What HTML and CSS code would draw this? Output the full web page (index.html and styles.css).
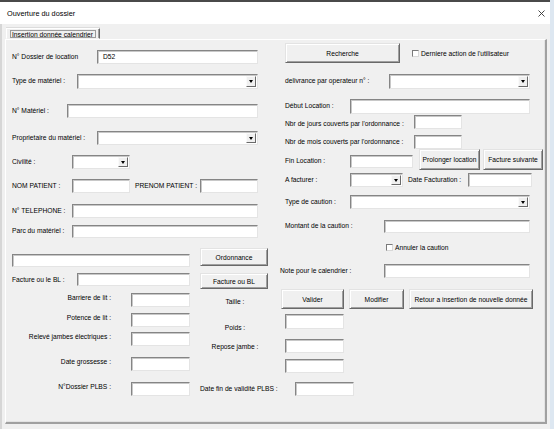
FILE: index.html
```html
<!DOCTYPE html>
<html lang="fr">
<head>
<meta charset="utf-8">
<title>Ouverture du dossier</title>
<link rel="stylesheet" href="styles.css">
</head>
<body>
<div class="window">
  <div class="titlebar">
    <span class="title">Ouverture du dossier</span>
    <svg class="close" width="7" height="7" viewBox="0 0 7 7"><path d="M0.5 0.5L6.5 6.5M6.5 0.5L0.5 6.5" stroke="#333" stroke-width="0.9" fill="none"/></svg>
  </div>
  <div class="client">
    <div class="tabs"><div class="tab"><span class="tab-label">Insertion donnée calendrier</span></div></div>
    <div class="page">
      <div class="form">
        <div class="col-left">
          <div class="row mt10"><span class="lbl w85">N° Dossier de location</span><div class="tb w161">D52</div></div>
          <div class="row mt10"><span class="lbl w65">Type de matériel :</span><div class="tb sel w181 h15"><span class="drop"></span></div></div>
          <div class="row mt15"><span class="lbl w55">N° Matériel :</span><div class="tb w191"></div></div>
          <div class="row mt13"><span class="lbl w85">Proprietaire du matériel :</span><div class="tb sel w161"><span class="drop"></span></div></div>
          <div class="row mt10"><span class="lbl w60">Civilité :</span><div class="tb sel w58"><span class="drop"></span></div></div>
          <div class="row mt10"><span class="lbl w60">NOM PATIENT :</span><div class="tb w58"></div><span class="lbl w65 ml5">PRENOM PATIENT :</span><div class="tb w58"></div></div>
          <div class="row mt11"><span class="lbl w60">N° TELEPHONE :</span><div class="tb w186"></div></div>
          <div class="row mt7"><span class="lbl w60">Parc du matériel :</span><div class="tb w186 h13"></div></div>
          <div class="row top mt10"><div class="tb w178 h13 mt6"></div><button class="btn w68 h18 ml10">Ordonnance</button></div>
          <div class="row top mt6"><span class="lbl w65 mt2">Facture ou le BL :</span><div class="tb w113 h13"></div><button class="btn w68 h16 ml10">Facture ou BL</button></div>
          <div class="lower">
            <div class="lower-fields">
              <div class="row"><span class="lbl rt">Barriere de lit :</span><div class="tb w59"></div></div>
              <div class="row mt6"><span class="lbl rt">Potence de lit :</span><div class="tb w59"></div></div>
              <div class="row mt5"><span class="lbl rt">Relevé jambes électriques :</span><div class="tb w59"></div></div>
              <div class="row mt11"><span class="lbl rt">Date grossesse :</span><div class="tb w59"></div></div>
            </div>
            <div class="lower-mid">
              <span class="mid m1">Taille :</span>
              <span class="mid m2">Poids :</span>
              <span class="mid m3">Repose jambe :</span>
            </div>
          </div>
          <div class="row mt11"><span class="lbl rt">N°Dossier PLBS :</span><div class="tb w59"></div><span class="lbl w95 ml10">Date fin de validité PLBS :</span><div class="tb w59"></div></div>
        </div>
        <div class="col-right">
          <div class="row top mt3"><button class="btn w115 h20 ml5">Recherche</button><span class="check ml12 mt6"><span class="box"></span>Derniere action de l'utilisateur</span></div>
          <div class="row mt11"><span class="lbl w104 ml5">delivrance par operateur n° :</span><div class="tb sel w141 h15"><span class="drop"></span></div></div>
          <div class="row mt10"><span class="lbl w65 ml5">Début Location :</span><div class="tb w180 h15"></div></div>
          <div class="row mt1"><span class="lbl w129 ml5 down">Nbr de jours couverts par l'ordonnance :</span><div class="tb w48"></div></div>
          <div class="row mt6"><span class="lbl w129 ml5">Nbr de mois couverts par l'ordonnance :</span><div class="tb w48"></div></div>
          <div class="row top"><span class="lbl w65 ml5 mt7">Fin Location :</span><div class="tb w63 h13 mt6"></div><button class="btn w61 h21 ml6">Prolonger location</button><button class="btn w60 h21 ml3">Facture suivante</button></div>
          <div class="row mt3"><span class="lbl w65 ml5">A facturer :</span><div class="tb sel w53"><span class="drop"></span></div><span class="lbl w60 ml5">Date Facturation :</span><div class="tb w64"></div></div>
          <div class="row mt8"><span class="lbl w65 ml5">Type de caution :</span><div class="tb sel w180"><span class="drop"></span></div></div>
          <div class="row mt11"><span class="lbl w99 ml5">Montant de la caution :</span><div class="tb w146 h13"></div></div>
          <div class="row mt10"><span class="check ml106"><span class="box"></span>Annuler la caution</span></div>
          <div class="row mt12"><span class="lbl w104">Note pour le calendrier :</span><div class="tb w146"></div></div>
          <div class="row mt11"><button class="btn w63 h20 ml1">Valider</button><button class="btn w55 h20 ml5">Modifier</button><button class="btn w124 h20 ml5">Retour a insertion de nouvelle donnée</button></div>
          <div class="row mt5"><div class="tb w59 h15 ml5"></div></div>
          <div class="row mt10"><div class="tb w59 ml5"></div></div>
          <div class="row mt6"><div class="tb w59 ml5"></div></div>
        </div>
      </div>
    </div>
  </div>
</div>
</body>
</html>
```
FILE: styles.css
```css
* { box-sizing: border-box; }
html, body { margin: 0; padding: 0; }
body {
  width: 554px;
  height: 429px;
  overflow: hidden;
  background: #dde7f1;
  font-family: "Liberation Sans", Arial, sans-serif;
  font-size: 6.7px;
  color: #000;
}
.window {
  width: 550px;
  height: 429px;
  display: flex;
  flex-direction: column;
  background: #f0f0f0;
}
.titlebar {
  height: 24px;
  flex-shrink: 0;
  border-top: 2px solid #4a4a4a;
  background: #fff;
  display: flex;
  align-items: center;
  justify-content: space-between;
  padding: 0 5px 0 7px;
}
.title { font-size: 7.3px; color: #000; }
.close { display: block; }
.client {
  flex: 1;
  border-left: 2px solid #d6d6d6;
  padding: 4px 0 0 4px;
}
.tabs { height: 11px; display: flex; }
.tab {
  width: 94px;
  height: 11px;
  border: 1px solid;
  border-color: #fff #6a6a6a #f0f0f0 #fff;
  box-shadow: inset -1px 0 0 #a0a0a0, 0 -1px 0 #dcdcdc;
  padding: 1px 3px 0 3px;
}
.tab-label {
  display: block;
  height: 8px;
  line-height: 7px;
  border: 1px solid #9a9a9a;
  padding-left: 1px;
  white-space: nowrap;
}
.page {
  margin-left: -1px;
  width: 542px;
  height: 385px;
  border-style: solid;
  border-width: 1px 2px 2px 1px;
  border-color: #fff #a0a0a0 #a0a0a0 #fff;
  box-shadow: inset -1px -1px 0 #e3e3e3;
}
.form { display: flex; padding-left: 6px; }
.col-left { width: 268px; flex-shrink: 0; display: flex; flex-direction: column; }
.col-right { width: 265px; flex-shrink: 0; display: flex; flex-direction: column; }
.row { display: flex; align-items: center; flex-shrink: 0; }
.row.top { align-items: flex-start; }
.lbl {
  flex-shrink: 0;
  white-space: nowrap;
  line-height: 9px;
  margin-bottom: 2px;
}
.lbl.down { margin-bottom: 0; margin-top: 3px; }
.row.top .lbl { margin-bottom: 0; }
.lbl.rt { width: 99px; margin-right: 20px; text-align: right; margin-bottom: 5px; }
.tb {
  height: 14px;
  flex-shrink: 0;
  background: #fff;
  border: 1px solid;
  border-color: #858585 #e4e4e4 #e4e4e4 #858585;
  box-shadow: inset 1px 1px 0 #c8c8c8;
  padding-left: 5px;
  line-height: 12px;
  white-space: nowrap;
}
.sel {
  display: flex;
  justify-content: flex-end;
  padding: 1px;
}
.drop {
  width: 10px;
  background: #f0f0f0;
  border: 1px solid;
  border-color: #fafafa #6a6a6a #6a6a6a #fafafa;
  display: flex;
  align-items: center;
  justify-content: center;
}
.drop::after {
  content: "";
  width: 0;
  height: 0;
  border-left: 2.5px solid transparent;
  border-right: 2.5px solid transparent;
  border-top: 3px solid #000;
}
.btn {
  flex-shrink: 0;
  padding: 0;
  margin: 0;
  font: inherit;
  color: #000;
  background: #f0f0f0;
  border: 1px solid;
  border-color: #e3e3e3 #696969 #696969 #e3e3e3;
  box-shadow: inset 1px 1px 0 #fff, inset -1px -1px 0 #a0a0a0;
  display: flex;
  align-items: center;
  justify-content: center;
  white-space: nowrap;
}
.check {
  display: flex;
  align-items: center;
  white-space: nowrap;
  line-height: 9px;
}
.box {
  width: 7px;
  height: 7px;
  background: #fff;
  border: 1px solid;
  border-color: #7a7a7a #d8d8d8 #d8d8d8 #7a7a7a;
  margin-right: 2px;
  flex-shrink: 0;
}
.lower { display: flex; margin-top: 4px; }
.lower-fields { width: 188px; flex-shrink: 0; display: flex; flex-direction: column; }
.lower-mid { width: 70px; flex-shrink: 0; display: flex; flex-direction: column; align-items: center; margin-left: 0; }
.mid { line-height: 9px; white-space: nowrap; }
.m1 { margin-top: 4px; }
.m2 { margin-top: 17px; }
.m3 { margin-top: 10px; }

/* sizes */
.w48 { width: 48px; } .w53 { width: 53px; } .w55 { width: 55px; } .w58 { width: 58px; }
.w59 { width: 59px; } .w60 { width: 60px; } .w61 { width: 61px; } .w63 { width: 63px; }
.w64 { width: 64px; } .w65 { width: 65px; } .w68 { width: 68px; } .w85 { width: 85px; }
.w95 { width: 95px; } .w99 { width: 99px; } .w104 { width: 104px; } .w113 { width: 113px; }
.w115 { width: 115px; } .w124 { width: 124px; } .w129 { width: 129px; } .w141 { width: 141px; }
.w146 { width: 146px; } .w161 { width: 161px; } .w178 { width: 178px; } .w180 { width: 180px; }
.w181 { width: 181px; } .w186 { width: 186px; } .w191 { width: 191px; }
.h13 { height: 13px; } .h15 { height: 15px; } .h16 { height: 16px; } .h18 { height: 18px; }
.h20 { height: 20px; } .h21 { height: 21px; }
.mt1 { margin-top: 1px; } .mt2 { margin-top: 2px; } .mt3 { margin-top: 3px; } .mt5 { margin-top: 5px; }
.mt6 { margin-top: 6px; } .mt7 { margin-top: 7px; } .mt8 { margin-top: 8px; } .mt10 { margin-top: 10px; }
.mt11 { margin-top: 11px; } .mt12 { margin-top: 12px; } .mt13 { margin-top: 13px; } .mt15 { margin-top: 15px; }
.ml1 { margin-left: 1px; } .ml3 { margin-left: 3px; } .ml5 { margin-left: 5px; } .ml6 { margin-left: 6px; }
.ml10 { margin-left: 10px; } .ml12 { margin-left: 12px; } .ml106 { margin-left: 106px; }
```
